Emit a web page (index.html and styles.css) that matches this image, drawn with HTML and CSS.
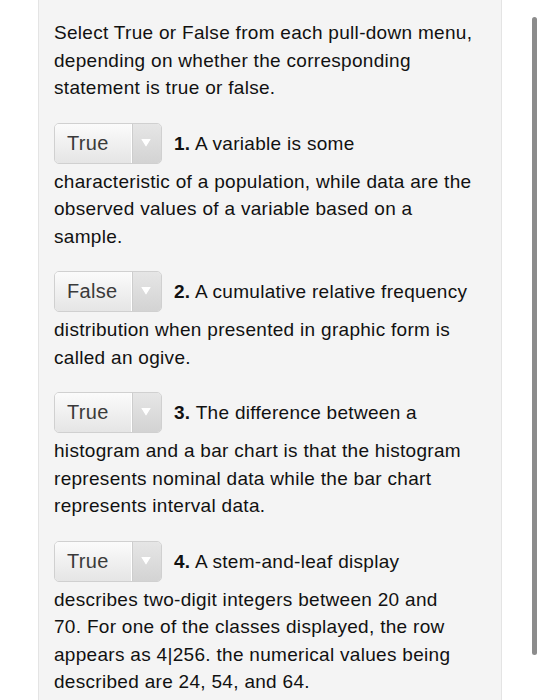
FILE: index.html
```html
<!DOCTYPE html>
<html lang="en">
<head>
    <meta charset="UTF-8">
    <meta name="viewport" content="width=device-width, initial-scale=1.0">
    <title>True or False</title>
    <link rel="stylesheet" href="styles.css">
</head>
<body>
    <div class="panel">
        <p>Select True or False from each pull-down menu, depending on whether the corresponding statement is true or false.</p>

        <p class="item"><span class="select"><span class="select-value">True</span><span class="select-arrow"></span></span><b>1.</b> A variable is some<br>characteristic of a population, while data are the observed values of a variable based on a sample.</p>

        <p class="item"><span class="select"><span class="select-value">False</span><span class="select-arrow"></span></span><b>2.</b> A cumulative relative frequency distribution when presented in graphic form is called an ogive.</p>

        <p class="item"><span class="select"><span class="select-value">True</span><span class="select-arrow"></span></span><b>3.</b> The difference between a histogram and a bar chart is that the histogram represents nominal data while the bar chart represents interval data.</p>

        <p class="item"><span class="select"><span class="select-value">True</span><span class="select-arrow"></span></span><b>4.</b> A stem-and-leaf display describes two-digit integers between 20 and<br>70. For one of the classes displayed, the row appears as 4|256. the numerical values being described are 24, 54, and 64.</p>
    </div>
    <div class="scrollbar"></div>
</body>
</html>
```

FILE: styles.css
```css
body {
    margin: 0;
    background-color: #fff;
    font-family: "Liberation Sans", Arial, sans-serif;
    font-size: 19px;
    letter-spacing: 0.3px;
    line-height: 27.5px;
    color: #111;
}
.panel {
    box-sizing: border-box;
    width: 464px;
    min-height: 700px;
    margin-left: 38px;
    padding: 19px 15px 18px;
    border-left: 1px solid #e4e4e4;
    border-right: 1px solid #e4e4e4;
    background-color: #f4f4f4;
}
.panel p {
    margin: 0 0 17px;
}
.select {
    display: inline-flex;
    box-sizing: border-box;
    width: 108px;
    height: 41px;
    margin: 4px 12px 4px 0;
    border: 1px solid #d0d0d0;
    border-radius: 5px;
    overflow: hidden;
    vertical-align: baseline;
}
.select-value {
    flex: 1;
    padding-left: 12px;
    font-size: 20px;
    line-height: 39px;
    color: #3a3a3a;
    background: linear-gradient(#fbfbfb, #e5e5e5);
    box-shadow: inset -1px 0 0 #fff;
}
.select-arrow {
    position: relative;
    width: 28px;
    border-left: 1px solid #cdcdcd;
    background: linear-gradient(#e6e6e6, #d3d3d3);
}
.select-arrow::after {
    content: "";
    position: absolute;
    left: 8px;
    top: 15px;
    border-top: 8px solid #fff;
    border-left: 5px solid transparent;
    border-right: 5px solid transparent;
    filter: drop-shadow(0 0 0.5px #bbb);
}
.scrollbar {
    position: fixed;
    left: 532px;
    top: 17px;
    width: 5px;
    height: 638px;
    border-radius: 3px;
    background-color: #8c8c8c;
}
```
